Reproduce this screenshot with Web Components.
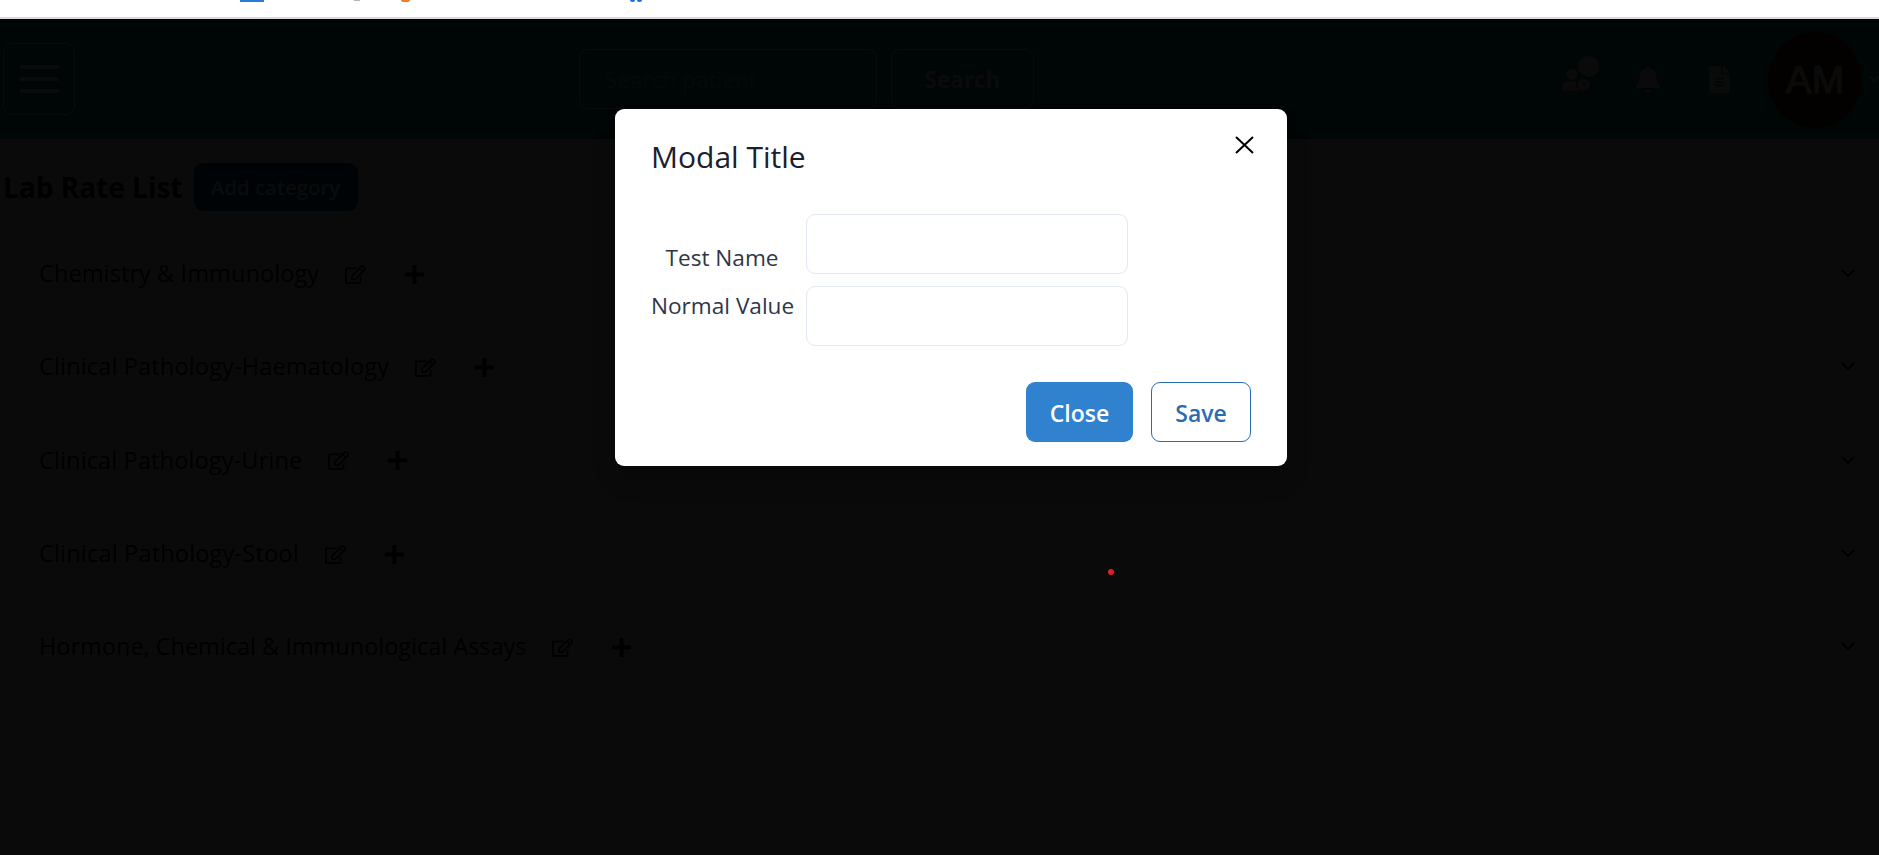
<!DOCTYPE html>
<html>
<head>
<meta charset="utf-8">
<title>Lab Rate List</title>
<style>
  html, body { margin: 0; height: 100%; background: #fff; }
  body { font-family: "Open Sans", "Noto Sans", sans-serif; overflow: hidden; }
</style>
</head>
<body>
<browser-strip></browser-strip>
<app-shell>
  <top-bar></top-bar>
  <page-title>Lab Rate List</page-title>
  <lab-row style="letter-spacing:.05px">Chemistry &amp; Immunology</lab-row>
  <lab-row style="letter-spacing:.12px">Clinical Pathology-Haematology</lab-row>
  <lab-row style="letter-spacing:.1px">Clinical Pathology-Urine</lab-row>
  <lab-row style="letter-spacing:.15px">Clinical Pathology-Stool</lab-row>
  <lab-row style="letter-spacing:-.06px">Hormone, Chemical &amp; Immunological Assays</lab-row>
  <test-modal title-text="Modal Title"></test-modal>
</app-shell>

<script>
const EDIT_PATH = 'M402.3 344.9l32-32c5-5 13.7-1.5 13.7 5.7V464c0 26.5-21.5 48-48 48H48c-26.5 0-48-21.5-48-48V112c0-26.5 21.5-48 48-48h273.5c7.1 0 10.7 8.6 5.7 13.7l-32 32c-1.5 1.5-3.5 2.3-5.7 2.3H48v352h352V350.5c0-2.1.8-4.1 2.3-5.6zm156.6-201.8L296.3 405.7l-90.4 10c-26.2 2.9-48.5-19.2-45.6-45.6l10-90.4L432.9 17.1c22.9-22.9 59.9-22.9 82.7 0l43.2 43.2c22.9 22.9 22.9 60 .1 82.8zM460.1 174L402 115.9 216.2 301.8l-7.3 65.3 65.3-7.3L460.1 174zm64.8-79.7l-43.2-43.2c-4.1-4.1-10.8-4.1-14.8 0L436 82l58.1 58.1 30.9-30.9c4-4.2 4-10.8-.1-14.9z';

class BrowserStrip extends HTMLElement {
  constructor() {
    super();
    this.attachShadow({ mode: 'open' });
    this.shadowRoot.innerHTML = `
      <style>
        :host { display: block; height: 17px; background: #fff; border-bottom: 2px solid #d9d9d9; position: relative; overflow: hidden; }
        i { position: absolute; top: 0; display: block; }
      </style>
      <i style="left:240px;width:24px;height:2px;background:#2b7bd6"></i>
      <i style="left:354px;width:6px;height:1px;background:#b5b5b5"></i>
      <i style="left:401px;width:9px;height:2px;background:#f47a2c;border-radius:0 0 5px 5px"></i>
      <i style="left:630px;width:5px;height:2px;background:#1a73e8;border-radius:0 0 3px 3px"></i>
      <i style="left:637px;width:5px;height:2px;background:#1a73e8;border-radius:0 0 3px 3px"></i>
    `;
  }
}
customElements.define('browser-strip', BrowserStrip);

class AppShell extends HTMLElement {
  constructor() {
    super();
    this.attachShadow({ mode: 'open' });
    this.shadowRoot.innerHTML = `
      <style>
        :host { display: block; position: relative; height: 836px; background: #fff; color: #000; overflow: hidden; }
      </style>
      <slot></slot>
    `;
  }
}
customElements.define('app-shell', AppShell);

class TopBar extends HTMLElement {
  constructor() {
    super();
    this.attachShadow({ mode: 'open' });
    this.shadowRoot.innerHTML = `
      <style>
        :host { display: flex; align-items: center; height: 120px; background: #007d96; color: #fff; padding-left: 3px; position: relative; }
        .burger { width: 72px; height: 72px; box-sizing: border-box; border: 1px solid #fff; border-radius: 9px; display: flex; flex-direction: column; justify-content: center; align-items: center; gap: 8px; flex: none; }
        .burger i { display: block; width: 39px; height: 4px; background: #fff; border-radius: 1px; }
        .search { display: flex; gap: 14px; margin-left: 504px; }
        .search .box { width: 298px; height: 60px; box-sizing: border-box; border: 1px solid #fff; border-radius: 9px; display: flex; align-items: center; padding-left: 25px; font-size: 22.5px; color: #a0aec0; }
        .search .btn { width: 143px; height: 60px; box-sizing: border-box; border: 1px solid #fff; border-radius: 9px; display: flex; align-items: center; justify-content: center; font-size: 22.5px; font-weight: 700; }
        .right { margin-left: auto; display: flex; align-items: center; }
        svg { fill: #fff; display: block; }
        .clock { width: 28px; height: 22px; margin-top: 2px; }
        .badge { position: absolute; left: 1577.5px; top: 36.5px; width: 21px; height: 21px; border-radius: 50%; background: #fff; }
        .bell { width: 24px; height: 27px; margin-left: 46px; }
        .doc { width: 21px; height: 27px; margin-left: 49px; }
        .avatar { width: 94px; height: 96px; border-radius: 50%; background: #4b1900; margin: 1px 0 0 38px; display: flex; align-items: center; justify-content: center; font: 39px "Liberation Sans", Arial, sans-serif; -webkit-text-stroke: 1px #fff; color: #fff; }
        .chev { width: 9px; height: 6px; margin-left: 8px; fill: none; stroke: #fff; stroke-width: 2; }
      </style>
      <div class="burger"><i></i><i></i><i></i></div>
      <div class="search">
        <div class="box">Search patient</div>
        <div class="btn">Search</div>
      </div>
      <div class="right">
        <svg class="clock" viewBox="0 0 640 512"><path d="M496 224c-79.6 0-144 64.4-144 144s64.4 144 144 144 144-64.4 144-144-64.4-144-144-144zm64 150.3c0 5.3-4.4 9.7-9.7 9.7h-60.6c-5.3 0-9.7-4.4-9.7-9.7v-76.6c0-5.3 4.4-9.7 9.7-9.7h12.6c5.3 0 9.7 4.4 9.7 9.7V352h38.3c5.3 0 9.7 4.4 9.7 9.7v12.6zM320 368c0-27.8 6.7-54.1 18.2-77.5-1.8-.1-3.5-.5-5.3-.5h-16.7c-22.2 10.2-46.9 16-72.9 16s-50.6-5.8-72.9-16h-16.7C60.2 288 0 348.2 0 422.4V464c0 26.5 21.5 48 48 48h347.1c-45.3-31.9-75.1-84.5-75.1-144zm-96-112c70.7 0 128-57.3 128-128S294.7 0 224 0 96 57.3 96 128s57.3 128 128 128z"/></svg>
        <svg class="bell" viewBox="0 0 448 512"><path d="M224 512c35.32 0 63.97-28.65 63.97-64H160.03c0 35.35 28.65 64 63.97 64zm215.39-149.71c-19.32-20.76-55.47-51.99-55.47-154.29 0-77.7-54.48-139.9-127.94-155.16V32c0-17.67-14.32-32-31.98-32s-31.98 14.33-31.98 32v20.84C118.56 68.1 64.08 130.3 64.08 208c0 102.3-36.15 133.53-55.47 154.29-6 6.45-8.66 14.16-8.61 21.71.11 16.4 12.98 32 32.1 32h383.8c19.12 0 32-15.6 32.1-32 .05-7.55-2.61-15.27-8.61-21.71z"/></svg>
        <svg class="doc" viewBox="0 0 384 512"><path d="M224 136V0H24C10.7 0 0 10.7 0 24v464c0 13.3 10.7 24 24 24h336c13.3 0 24-10.7 24-24V160H248c-13.2 0-24-10.8-24-24zm64 236c0 6.6-5.4 12-12 12H108c-6.6 0-12-5.4-12-12v-8c0-6.6 5.4-12 12-12h168c6.6 0 12 5.4 12 12v8zm0-64c0 6.6-5.4 12-12 12H108c-6.6 0-12-5.4-12-12v-8c0-6.6 5.4-12 12-12h168c6.6 0 12 5.4 12 12v8zm0-72v8c0 6.6-5.4 12-12 12H108c-6.6 0-12-5.4-12-12v-8c0-6.6 5.4-12 12-12h168c6.6 0 12 5.4 12 12zm96-114.1v6.1H256V0h6.1c6.4 0 12.5 2.5 17 7l97.9 98c4.5 4.5 7 10.6 7 16.9z"/></svg>
        <div class="avatar">AM</div>
        <svg class="chev" viewBox="0 0 9 6"><path d="M0.5 0.5 L4.5 4.5 L8.5 0.5"/></svg>
      </div>
      <div class="badge"></div>
    `;
  }
}
customElements.define('top-bar', TopBar);

class PageTitle extends HTMLElement {
  constructor() {
    super();
    this.attachShadow({ mode: 'open' });
    this.shadowRoot.innerHTML = `
      <style>
        :host { display: flex; align-items: center; height: 80px; box-sizing: border-box; padding: 16px 0 0 3px; gap: 11px; }
        h2 { margin: 0; font-size: 28px; font-weight: 700; }
        .add { height: 48px; width: 164px; background: #005a96; color: #fff; border-radius: 9px; display: flex; align-items: center; justify-content: center; font-size: 20.4px; font-weight: 600; }
      </style>
      <h2><slot></slot></h2>
      <div class="add">Add category</div>
    `;
  }
}
customElements.define('page-title', PageTitle);

class LabRow extends HTMLElement {
  constructor() {
    super();
    this.attachShadow({ mode: 'open' });
    this.shadowRoot.innerHTML = `
      <style>
        :host { display: flex; align-items: center; height: 93.3px; box-sizing: border-box; padding: 16px 24px 0 39px; border-bottom: 1px solid #e2e8f0; font-size: 23.6px; }
        svg { margin-top: 2px; }
        .edit { width: 21px; height: 19px; margin-left: 26px; fill: #000; }
        .plus { width: 19px; height: 19px; margin-left: 39px; stroke: #000; stroke-width: 4; }
        .chev { width: 14px; height: 8px; margin-left: auto; fill: none; stroke: #000; stroke-width: 2.4; margin-top: 0; }
      </style>
      <slot></slot>
      <svg class="edit" viewBox="0 0 576 512"><path d="${EDIT_PATH}"/></svg>
      <svg class="plus" viewBox="0 0 19 19"><path d="M9.5 0 V19 M0 9.5 H19"/></svg>
      <svg class="chev" viewBox="0 0 14 8"><path d="M1 1 L7 7 L13 1"/></svg>
    `;
  }
}
customElements.define('lab-row', LabRow);

class TestModal extends HTMLElement {
  constructor() {
    super();
    this.attachShadow({ mode: 'open' });
    this.shadowRoot.innerHTML = `
      <style>
        :host { position: absolute; inset: 0; display: block; background: rgba(0,0,0,.96); color: #1a202c; letter-spacing: 0; }
        .dot { position: absolute; left: 1108px; top: 550px; width: 6px; height: 6px; border-radius: 50%; background: #e01f1f; }
        .modal { position: absolute; left: 615px; top: 90px; width: 672px; background: #fff; border-radius: 9px; box-shadow: 0 15px 22px rgba(0,0,0,.2); }
        header { padding: 25px 36px 23px; font-size: 30px; font-weight: 500; line-height: 45px; }
        .close { position: absolute; top: 27px; right: 33px; width: 19px; height: 18px; stroke: #000; stroke-width: 2; fill: none; }
        .body { padding: 12px 36px; display: grid; grid-template-columns: 142px 322px; column-gap: 13px; row-gap: 12px; font-size: 22.6px; line-height: 36px; }
        label { text-align: center; color: #2d3748; white-space: nowrap; }
        label.low { align-self: end; margin-bottom: -2px; }
        label.high { align-self: start; padding-top: 2px; }
        input { height: 60px; box-sizing: border-box; border: 1px solid #e2e8f0; border-radius: 9px; background: #fff; width: 100%; margin: 0; padding: 0; }
        footer { display: flex; justify-content: flex-end; gap: 18px; padding: 24px 36px; }
        button { height: 60px; box-sizing: border-box; border-radius: 9px; font: 600 23px "Open Sans", "Noto Sans", sans-serif; margin: 0; padding: 2px 0 0; }
        .primary { width: 107px; background: #3182ce; color: #fff; border: 0; }
        .ghost { width: 100px; background: #fff; color: #2b6cb0; border: 1px solid #2b6cb0; }
      </style>
      <div class="dot"></div>
      <div class="modal" role="dialog">
        <header>${this.getAttribute('title-text') || ''}</header>
        <svg class="close" viewBox="0 0 19 18" preserveAspectRatio="none"><path d="M1 1 L18 17 M18 1 L1 17"/></svg>
        <div class="body">
          <label class="low">Test Name</label><input type="text">
          <label class="high">Normal Value</label><input type="text">
        </div>
        <footer>
          <button class="primary">Close</button>
          <button class="ghost">Save</button>
        </footer>
      </div>
    `;
  }
}
customElements.define('test-modal', TestModal);
</script>
</body>
</html>
